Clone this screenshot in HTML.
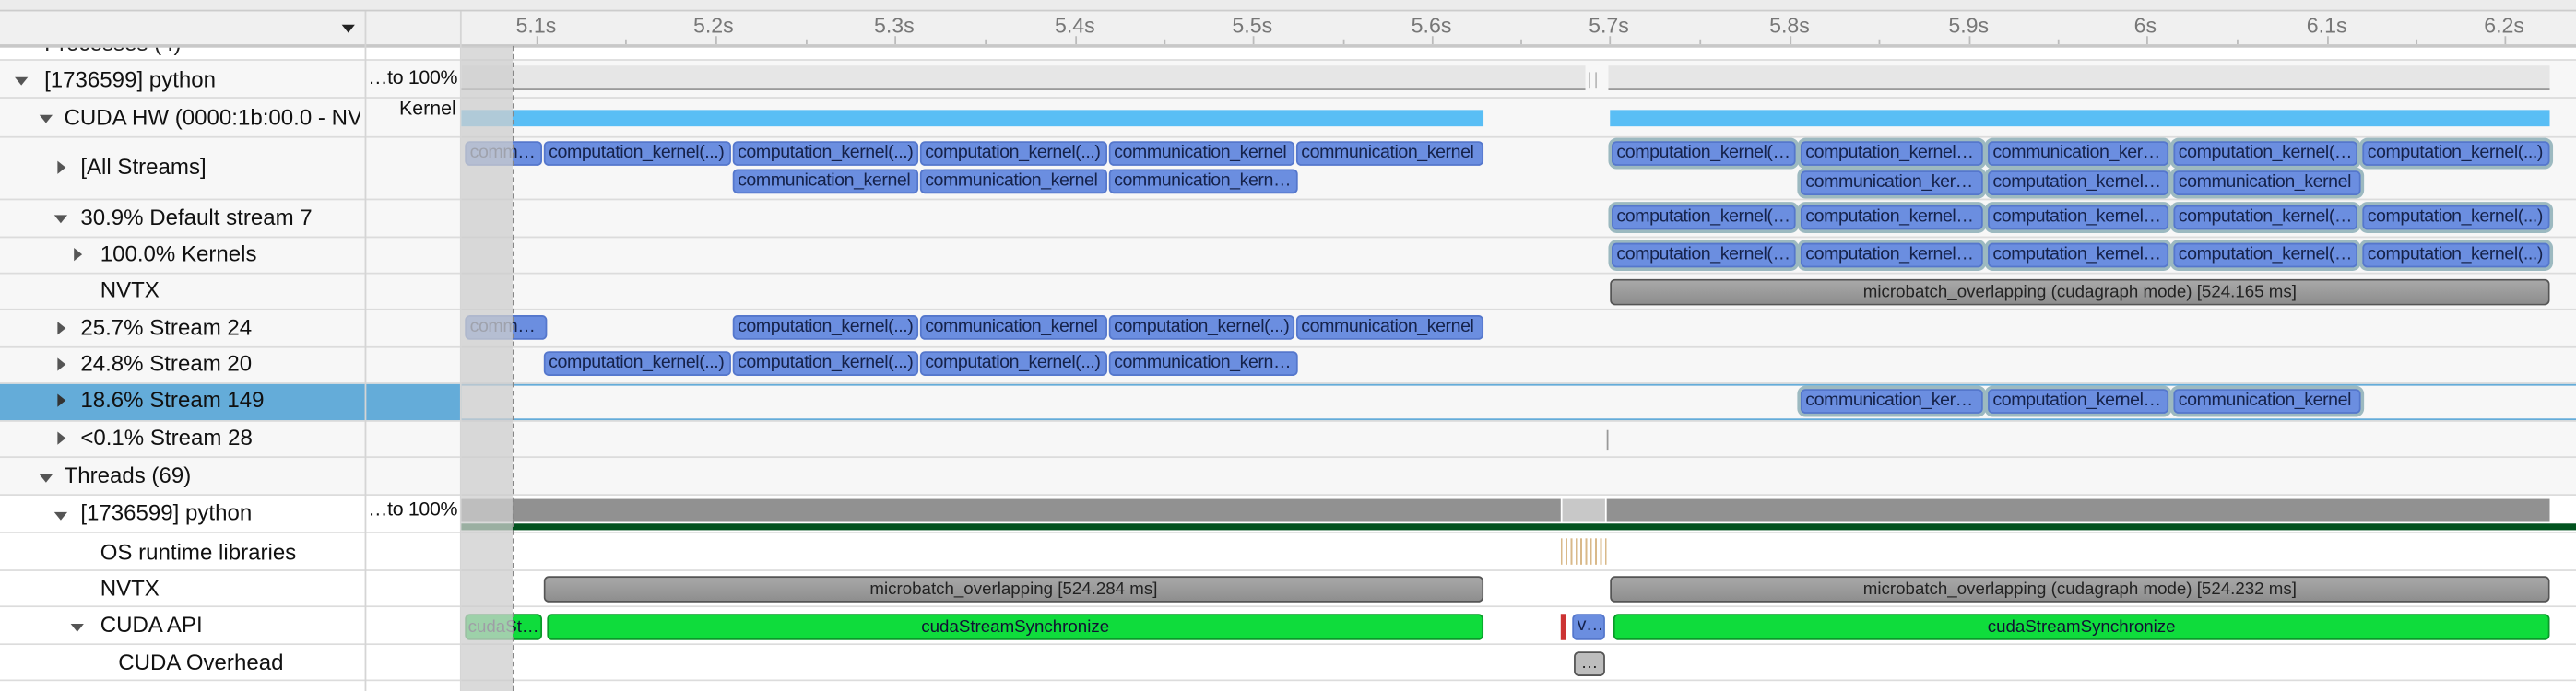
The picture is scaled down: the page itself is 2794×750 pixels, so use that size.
<!DOCTYPE html>
<html><head><meta charset="utf-8"><style>
html,body{margin:0;padding:0;width:2794px;height:750px;overflow:hidden;background:#f7f7f7}
#w{position:absolute;left:0;top:0;width:1568px;height:421px;transform:scale(1.78189,1.78147);transform-origin:0 0;font-family:"Liberation Sans",sans-serif;background:#f7f7f7;overflow:hidden}
.a{position:absolute}
.row{position:absolute;left:0;width:1568px;border-bottom:1px solid #dcdcdc;box-sizing:border-box}
.lab{position:absolute;font-size:13.5px;color:#111;white-space:nowrap}
.tri{position:absolute;width:0;height:0}
.td{border-left:4.5px solid transparent;border-right:4.5px solid transparent;border-top:5px solid #555}
.tr{border-top:4.5px solid transparent;border-bottom:4.5px solid transparent;border-left:5px solid #555}
.k{position:absolute;height:15px;background:#6b8ee0;border:1px solid #5577cc;border-radius:3px;box-sizing:border-box;font-size:11px;letter-spacing:-0.25px;line-height:13px;color:#15224a;white-space:nowrap;overflow:hidden;text-overflow:ellipsis;padding:0 2px}
.o{box-shadow:0 0 0 2px #9cb9c0}
.g{position:absolute;height:16px;background:linear-gradient(#a8a8a8,#8e8e8e);border:1px solid #555;border-radius:3px;box-sizing:border-box;font-size:10.5px;line-height:14px;color:#222;text-align:center;white-space:nowrap;overflow:hidden}
.gr{position:absolute;height:16px;background:#0fdc3c;border:1px solid #0a9a2a;border-radius:3px;box-sizing:border-box;font-size:10.5px;line-height:14px;color:#113;text-align:center;white-space:nowrap;overflow:hidden}
.tl{position:absolute;top:8px;font-size:13px;color:#777}
</style></head><body><div id="w">
<!-- rows -->
<div class="row" style="top:27px;height:10px;background:#fff"></div>
<div class="lab" style="left:27px;top:19px;color:#222">Processes (4)</div>
<div class="row" style="top:37px;height:23px"></div>
<div class="row" style="top:60px;height:24px"></div>
<div class="row" style="top:84px;height:38px"></div>
<div class="row" style="top:122px;height:23px"></div>
<div class="row" style="top:145px;height:22px"></div>
<div class="row" style="top:167px;height:22px"></div>
<div class="row" style="top:189px;height:23px"></div>
<div class="row" style="top:212px;height:22px"></div>
<div class="row" style="top:234px;height:23px"></div>
<div class="a" style="left:0;top:234px;width:281px;height:22px;background:#64acd9"></div>
<div class="a" style="left:281px;top:234px;width:1287px;height:22px;border-top:1px solid #64acd9;border-bottom:1px solid #64acd9;box-sizing:border-box"></div>
<div class="row" style="top:257px;height:22px"></div>
<div class="row" style="top:279px;height:23px"></div>
<div class="row" style="top:302px;height:23px;background:#fff"></div>
<div class="row" style="top:325px;height:23px;background:#fff"></div>
<div class="row" style="top:348px;height:22px;background:#fff"></div>
<div class="row" style="top:370px;height:23px;background:#fff"></div>
<div class="row" style="top:393px;height:22px;background:#fff"></div>
<div class="a" style="left:0;top:415px;width:1568px;height:6px;background:#fff"></div>
<!-- top strip & header -->
<div class="a" style="left:0;top:0;width:1568px;height:6px;background:#ececec;border-bottom:1px solid #ccc"></div>
<div class="a" style="left:0;top:7px;width:1568px;height:20px;background:#f0f0f0;border-bottom:2px solid #c8c8c8"></div>
<div class="tri td" style="left:208px;top:15px;border-top-color:#222"></div>
<div class="tl" style="left:314px">5.1s</div><div class="tl" style="left:422px">5.2s</div><div class="tl" style="left:532px">5.3s</div><div class="tl" style="left:642px">5.4s</div><div class="tl" style="left:750px">5.5s</div><div class="tl" style="left:859px">5.6s</div><div class="tl" style="left:967px">5.7s</div><div class="tl" style="left:1077px">5.8s</div><div class="tl" style="left:1186px">5.9s</div><div class="tl" style="left:1299px">6s</div><div class="tl" style="left:1404px">6.1s</div><div class="tl" style="left:1512px">6.2s</div>
<svg class="a" style="left:281px;top:21px" width="1287" height="6">
<g stroke="#bbb" stroke-width="1">
<line x1="46" y1="1" x2="46" y2="6"/><line x1="155" y1="1" x2="155" y2="6"/><line x1="264" y1="1" x2="264" y2="6"/><line x1="374" y1="1" x2="374" y2="6"/><line x1="482" y1="1" x2="482" y2="6"/><line x1="591" y1="1" x2="591" y2="6"/><line x1="699" y1="1" x2="699" y2="6"/><line x1="809" y1="1" x2="809" y2="6"/><line x1="918" y1="1" x2="918" y2="6"/><line x1="1026" y1="1" x2="1026" y2="6"/><line x1="1136" y1="1" x2="1136" y2="6"/><line x1="1244" y1="1" x2="1244" y2="6"/>
<line x1="100" y1="3" x2="100" y2="6"/><line x1="210" y1="3" x2="210" y2="6"/><line x1="319" y1="3" x2="319" y2="6"/><line x1="428" y1="3" x2="428" y2="6"/><line x1="537" y1="3" x2="537" y2="6"/><line x1="645" y1="3" x2="645" y2="6"/><line x1="754" y1="3" x2="754" y2="6"/><line x1="863" y1="3" x2="863" y2="6"/><line x1="972" y1="3" x2="972" y2="6"/><line x1="1081" y1="3" x2="1081" y2="6"/><line x1="1190" y1="3" x2="1190" y2="6"/>
</g></svg>
<!-- dividers -->
<div class="a" style="left:222px;top:7px;width:1px;height:414px;background:#d5d5d5"></div>
<div class="a" style="left:280px;top:7px;width:1px;height:414px;background:#d5d5d5"></div>
<!-- labels -->
<div class="tri td" style="left:9px;top:47px"></div><div class="lab" style="left:27px;top:41px">[1736599] python</div>
<div class="tri td" style="left:24px;top:70px"></div><div class="lab" style="left:39px;top:64px">CUDA HW (0000:1b:00.0 - NV</div>
<div class="a" style="left:219px;top:60px;width:3px;height:23px;background:#f7f7f7"></div>
<div class="tri tr" style="left:35px;top:98px"></div><div class="lab" style="left:49px;top:94px">[All Streams]</div>
<div class="tri td" style="left:33px;top:131px"></div><div class="lab" style="left:49px;top:125px">30.9% Default stream 7</div>
<div class="tri tr" style="left:45px;top:151px"></div><div class="lab" style="left:61px;top:147px">100.0% Kernels</div>
<div class="lab" style="left:61px;top:169px">NVTX</div>
<div class="tri tr" style="left:35px;top:196px"></div><div class="lab" style="left:49px;top:192px">25.7% Stream 24</div>
<div class="tri tr" style="left:35px;top:218px"></div><div class="lab" style="left:49px;top:214px">24.8% Stream 20</div>
<div class="tri tr" style="left:35px;top:240px;border-left-color:#333"></div><div class="lab" style="left:49px;top:236px">18.6% Stream 149</div>
<div class="tri tr" style="left:35px;top:263px"></div><div class="lab" style="left:49px;top:259px">&lt;0.1% Stream 28</div>
<div class="tri td" style="left:24px;top:289px"></div><div class="lab" style="left:39px;top:282px">Threads (69)</div>
<div class="tri td" style="left:33px;top:312px"></div><div class="lab" style="left:49px;top:305px">[1736599] python</div>
<div class="lab" style="left:61px;top:329px">OS runtime libraries</div>
<div class="lab" style="left:61px;top:351px">NVTX</div>
<div class="tri td" style="left:43px;top:380px"></div><div class="lab" style="left:61px;top:373px">CUDA API</div>
<div class="lab" style="left:72px;top:396px">CUDA Overhead</div>
<div class="lab" style="left:224px;top:40px;font-size:12px;letter-spacing:-0.2px">…to 100%</div>
<div class="lab" style="left:243px;top:59px;font-size:12px">Kernel</div>
<div class="lab" style="left:224px;top:303px;font-size:12px;letter-spacing:-0.2px">…to 100%</div>
<!-- python process bar -->
<div class="a" style="left:281px;top:40px;width:684px;height:14px;background:#e6e6e6;border-bottom:1px solid #999"></div>
<div class="a" style="left:979px;top:40px;width:573px;height:14px;background:#e6e6e6;border-bottom:1px solid #999"></div>
<div class="a" style="left:967px;top:44px;width:1px;height:10px;background:#bbb"></div><div class="a" style="left:971px;top:44px;width:1px;height:10px;background:#bbb"></div>
<!-- CUDA HW bar -->
<div class="a" style="left:281px;top:67px;width:622px;height:10px;background:#59bef5"></div>
<div class="a" style="left:980px;top:67px;width:572px;height:10px;background:#59bef5"></div>
<!-- All streams -->
<div class="k" style="left:283px;top:86px;width:47px">communication</div>
<div class="k" style="left:331px;top:86px;width:114px">computation_kernel(...)</div>
<div class="k" style="left:446px;top:86px;width:113px">computation_kernel(...)</div>
<div class="k" style="left:560px;top:86px;width:114px">computation_kernel(...)</div>
<div class="k" style="left:675px;top:86px;width:113px">communication_kernel</div>
<div class="k" style="left:789px;top:86px;width:114px">communication_kernel</div>
<div class="k" style="left:446px;top:103px;width:113px">communication_kernel</div>
<div class="k" style="left:560px;top:103px;width:114px">communication_kernel</div>
<div class="k" style="left:675px;top:103px;width:115px">communication_kernel(...)</div>
<div class="k o" style="left:981px;top:86px;width:112px">computation_kernel(...)</div>
<div class="k o" style="left:1096px;top:86px;width:111px">computation_kernel(...)</div>
<div class="k o" style="left:1210px;top:86px;width:110px">communication_kernel</div>
<div class="k o" style="left:1323px;top:86px;width:112px">computation_kernel(...)</div>
<div class="k o" style="left:1438px;top:86px;width:114px">computation_kernel(...)</div>
<div class="k o" style="left:1096px;top:104px;width:111px">communication_kernel</div>
<div class="k o" style="left:1210px;top:104px;width:110px">computation_kernel(...)</div>
<div class="k o" style="left:1323px;top:104px;width:114px">communication_kernel</div>
<!-- default stream / kernels -->
<div class="k o" style="left:981px;top:125px;width:112px">computation_kernel(...)</div>
<div class="k o" style="left:1096px;top:125px;width:111px">computation_kernel(...)</div>
<div class="k o" style="left:1210px;top:125px;width:110px">computation_kernel(...)</div>
<div class="k o" style="left:1323px;top:125px;width:112px">computation_kernel(...)</div>
<div class="k o" style="left:1438px;top:125px;width:114px">computation_kernel(...)</div>
<div class="k o" style="left:981px;top:148px;width:112px">computation_kernel(...)</div>
<div class="k o" style="left:1096px;top:148px;width:111px">computation_kernel(...)</div>
<div class="k o" style="left:1210px;top:148px;width:110px">computation_kernel(...)</div>
<div class="k o" style="left:1323px;top:148px;width:112px">computation_kernel(...)</div>
<div class="k o" style="left:1438px;top:148px;width:114px">computation_kernel(...)</div>
<div class="g" style="left:980px;top:170px;width:572px">microbatch_overlapping (cudagraph mode) [524.165 ms]</div>
<!-- stream 24 -->
<div class="k" style="left:283px;top:192px;width:50px">communication</div>
<div class="k" style="left:446px;top:192px;width:113px">computation_kernel(...)</div>
<div class="k" style="left:560px;top:192px;width:114px">communication_kernel</div>
<div class="k" style="left:675px;top:192px;width:113px">computation_kernel(...)</div>
<div class="k" style="left:789px;top:192px;width:114px">communication_kernel</div>
<!-- stream 20 -->
<div class="k" style="left:331px;top:214px;width:114px">computation_kernel(...)</div>
<div class="k" style="left:446px;top:214px;width:113px">computation_kernel(...)</div>
<div class="k" style="left:560px;top:214px;width:114px">computation_kernel(...)</div>
<div class="k" style="left:675px;top:214px;width:115px">communication_kernel(...)</div>
<!-- stream 149 -->
<div class="k o" style="left:1096px;top:237px;width:111px">communication_kernel</div>
<div class="k o" style="left:1210px;top:237px;width:110px">computation_kernel(...)</div>
<div class="k o" style="left:1323px;top:237px;width:114px">communication_kernel</div>
<div class="a" style="left:978px;top:262px;width:1px;height:12px;background:#999"></div>
<!-- python thread -->
<div class="a" style="left:281px;top:304px;width:669px;height:14px;background:#919191"></div>
<div class="a" style="left:978px;top:304px;width:574px;height:14px;background:#919191"></div>
<div class="a" style="left:951px;top:304px;width:26px;height:14px;background:#c8c8c8"></div>
<div class="a" style="left:281px;top:319px;width:1287px;height:4px;background:#02531f"></div>
<div class="a" style="left:950px;top:328px;width:30px;height:16px;background:repeating-linear-gradient(90deg,#d9b98a 0 1px,transparent 1px 3px)"></div>
<!-- NVTX thread -->
<div class="g" style="left:331px;top:351px;width:572px">microbatch_overlapping [524.284 ms]</div>
<div class="g" style="left:980px;top:351px;width:572px">microbatch_overlapping (cudagraph mode) [524.232 ms]</div>
<!-- CUDA API -->
<div class="gr" style="left:283px;top:374px;width:47px">cudaSt…</div>
<div class="gr" style="left:333px;top:374px;width:570px">cudaStreamSynchronize</div>
<div class="a" style="left:950px;top:374px;width:3px;height:16px;background:#c33"></div>
<div class="k" style="left:957px;top:374px;width:20px;height:16px">v…</div>
<div class="gr" style="left:982px;top:374px;width:570px">cudaStreamSynchronize</div>
<div class="g" style="left:958px;top:397px;width:19px;height:15px;background:#bdbdbd;line-height:12px">…</div>
<!-- shaded range & dashed line -->
<div class="a" style="left:281px;top:28px;width:31px;height:393px;background:rgba(205,205,205,0.75)"></div>
<div class="a" style="left:312px;top:28px;width:0;height:393px;border-left:1px dashed #888"></div>
</div></body></html>
